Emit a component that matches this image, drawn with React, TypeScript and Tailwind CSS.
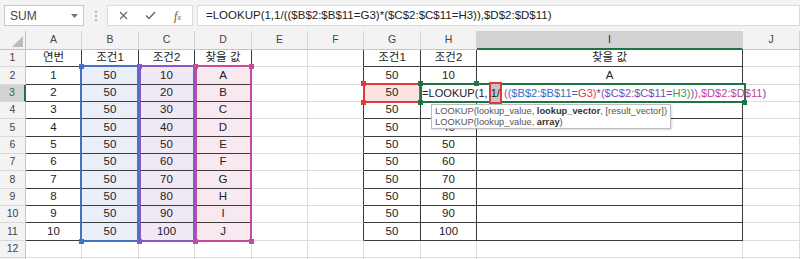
import React from "react";

const LETTERS = ["A", "B", "C", "D", "E", "F", "G", "H", "I", "J"];
const COLW = [
  "w-[56px]",
  "w-[57px]",
  "w-[56px]",
  "w-[57px]",
  "w-[56px]",
  "w-[56px]",
  "w-[57px]",
  "w-[56px]",
  "w-[266px]",
  "w-[57px]",
];
const ROWH = [
  "h-[17px]",
  "h-[18px]",
  "h-[17px]",
  "h-[17px]",
  "h-[18px]",
  "h-[17px]",
  "h-[17px]",
  "h-[18px]",
  "h-[17px]",
  "h-[17px]",
  "h-[18px]",
  "h-[17px]",
  "h-[17px]",
];

type Val = string | number;

const rows: Val[][] = [["연번", "조건1", "조건2", "찾을 값", "", "", "조건1", "조건2", "찾을 값", ""]];
for (let i = 1; i <= 10; i++) {
  rows.push([i, 50, i * 10, "ABCDEFGHIJ"[i - 1], "", "", 50, i * 10, i === 1 ? "A" : "", ""]);
}
rows.push(["", "", "", "", "", "", "", "", "", ""]);
rows.push(["", "", "", "", "", "", "", "", "", ""]);

function cellClass(r: number, c: number) {
  const inTable = r <= 11 && (c <= 3 || (c >= 6 && c <= 8));
  const rightDark = inTable || (c === 5 && r <= 11);
  let bg = "bg-white";
  if (r >= 2 && r <= 11 && c === 1) bg = "bg-[#e9eef8]";
  if (r >= 2 && r <= 11 && c === 2) bg = "bg-[#f0e9f5]";
  if (r >= 2 && r <= 11 && c === 3) bg = "bg-[#f8e9f1]";
  if (r === 3 && c === 6) bg = "bg-[#fae3e3]";
  return [
    "shrink-0 flex items-center justify-center border-r border-b",
    rightDark ? "border-r-[#3c3c3c]" : "border-r-[#dedede]",
    inTable ? "border-b-[#3c3c3c]" : "border-b-[#dedede]",
    bg,
  ].join(" ");
}

function Handle({ className }: { className: string }) {
  return <div className={"absolute w-[5px] h-[5px] " + className} />;
}

export default function App() {
  return (
    <div className="relative w-[800px] h-[259px] overflow-hidden bg-white text-[#222] font-['Liberation_Sans','Noto_Sans_CJK_KR',sans-serif]">
      {/* formula bar */}
      <div className="h-[31px] bg-[#f3f3f3] flex items-start pt-[5px]">
        <div className="ml-[4px] w-[80px] h-[21px] bg-white border border-[#c8c8c8] flex items-center justify-between pl-[5px] pr-[5px]">
          <span className="text-[12px] text-[#444]">SUM</span>
          <svg width="7" height="4" viewBox="0 0 7 4">
            <path d="M0 0h7L3.5 4z" fill="#777" />
          </svg>
        </div>
        <div className="w-[23px] h-[21px] flex flex-col items-center justify-center gap-[2px]">
          <div className="w-[2px] h-[2px] bg-[#b5b5b5]" />
          <div className="w-[2px] h-[2px] bg-[#b5b5b5]" />
          <div className="w-[2px] h-[2px] bg-[#b5b5b5]" />
        </div>
        <div className="w-[86px] h-[21px] bg-white border border-[#dadada] flex items-center pl-[2px]">
          <div className="w-[27px] flex justify-center">
            <svg width="9" height="9" viewBox="0 0 9 9">
              <path d="M1 1l7 7M8 1L1 8" stroke="#666" strokeWidth="1.2" />
            </svg>
          </div>
          <div className="w-[27px] flex justify-center">
            <svg width="11" height="9" viewBox="0 0 11 9">
              <path d="M1 4.5l3 3L10 1" stroke="#666" strokeWidth="1.4" fill="none" />
            </svg>
          </div>
          <div className="w-[27px] flex justify-center">
            <span className="italic font-['Liberation_Serif',serif] text-[12px] text-[#555] leading-none">
              f<span className="text-[8px]">x</span>
            </span>
          </div>
        </div>
        <div className="ml-[4px] flex-1 h-[21px] bg-white border border-[#dadada] flex items-center pl-[8px] text-[11.5px] whitespace-nowrap">
          =LOOKUP(1,1/(($B$2:$B$11=G3)*($C$2:$C$11=H3)),$D$2:$D$11)
        </div>
      </div>

      {/* column headers */}
      <div className="flex h-[19px]">
        <div className="relative w-[26px] shrink-0 bg-[#f3f3f3] border-r border-b border-[#c4c4c4]">
          <svg className="absolute right-[2px] bottom-[2px]" width="11" height="11" viewBox="0 0 11 11">
            <path d="M11 0V11H0z" fill="#bdbdbd" />
          </svg>
        </div>
        {LETTERS.map((l, c) => (
          <div
            key={l}
            className={
              COLW[c] +
              " shrink-0 flex items-center justify-center text-[10.5px] border-r border-[#d4d4d4] " +
              (c === 8
                ? "bg-[#d2d2d2] text-[#222] border-b-2 border-b-[#217346]"
                : "bg-[#f3f3f3] text-[#444] border-b border-b-[#c4c4c4]")
            }
          >
            {l}
          </div>
        ))}
      </div>

      {/* rows */}
      {rows.map((row, i) => {
        const r = i + 1;
        return (
          <div key={r} className={"flex " + ROWH[i]}>
            <div
              className={
                "w-[26px] shrink-0 flex items-center justify-center text-[10.5px] border-b border-b-[#d8d8d8] " +
                (r === 3
                  ? "bg-[#d2d2d2] text-[#217346] border-r-2 border-r-[#217346]"
                  : "bg-[#f3f3f3] text-[#444] border-r border-r-[#c4c4c4]")
              }
            >
              {r <= 12 ? r : ""}
            </div>
            {row.map((v, c) => (
              <div key={c} className={COLW[c] + " " + cellClass(r, c) + " text-[11.5px]"}>
                {v}
              </div>
            ))}
          </div>
        );
      })}

      {/* reference ranges */}
      <div className="absolute left-[80px] top-[65px] w-[59px] h-[177px] border-2 border-[#4472c4]" />
      <div className="absolute left-[139px] top-[65px] w-[56px] h-[177px] border-2 border-[#8a58c4]" />
      <div className="absolute left-[195px] top-[65px] w-[57px] h-[177px] border-2 border-[#c64b9b]" />
      <Handle className="left-[79px] top-[64px] bg-[#4472c4]" />
      <Handle className="left-[79px] top-[239px] bg-[#4472c4]" />
      <Handle className="left-[137px] top-[64px] bg-[#8a58c4]" />
      <Handle className="left-[137px] top-[239px] bg-[#8a58c4]" />
      <Handle className="left-[193px] top-[64px] bg-[#c64b9b]" />
      <Handle className="left-[193px] top-[239px] bg-[#c64b9b]" />
      <Handle className="left-[249px] top-[64px] bg-[#c64b9b]" />
      <Handle className="left-[249px] top-[239px] bg-[#c64b9b]" />

      {/* G3 reference */}
      <div className="absolute left-[363px] top-[83px] w-[58px] h-[20px] border-2 border-[#e0393e]" />
      <Handle className="left-[361px] top-[81px] bg-[#e0393e]" />
      <Handle className="left-[361px] top-[100px] bg-[#e0393e]" />

      {/* in-cell editor */}
      <div className="absolute left-[420px] top-[83px] w-[326px] h-[20px] border-2 border-[#217346] bg-white flex items-center whitespace-nowrap text-[11.1px]">
        <span>=LOOKUP(1,</span>
        <span className="inline-flex items-center h-[22px] border-2 border-[#e0393e] bg-[#c4c4c4] ml-[1px]">1/</span>
        <span className="text-[#b04da0] ml-[2px]">(</span>
        <span className="text-[#3b6cc8]">($B$2:$B$11=</span>
        <span className="text-[#e0393e]">G3)</span>
        <span className="text-[#7a3a8a]">*</span>
        <span className="text-[#7a4cc0]">($C$2:$C$11=</span>
        <span className="text-[#3a9a4f]">H3)</span>
        <span className="text-[#7a4cc0]">)</span>
        <span className="text-[#b04da0]">),</span>
        <span className="text-[#c2449a]">$D$2:$D$11</span>
        <span className="text-[#4f4fa8]">)</span>
      </div>
      <Handle className="left-[418px] top-[81px] bg-[#217346]" />
      <Handle className="left-[418px] top-[100px] bg-[#217346]" />
      <Handle className="left-[474px] top-[81px] bg-[#217346]" />
      <Handle className="left-[742px] top-[100px] bg-[#217346]" />

      {/* function tooltip */}
      <div className="absolute left-[431px] top-[104px] w-[240px] h-[25px] bg-white border border-[#bdbdbd] shadow-[1px_1px_2px_rgba(0,0,0,0.15)] pl-[3px] pt-[1px] text-[9.3px] leading-[11px] text-[#555] whitespace-nowrap">
        <div>
          LOOKUP(lookup_value, <b className="text-[#333]">lookup_vector</b>, [result_vector])
        </div>
        <div>
          LOOKUP(lookup_value, <b className="text-[#333]">array</b>)
        </div>
      </div>
    </div>
  );
}
